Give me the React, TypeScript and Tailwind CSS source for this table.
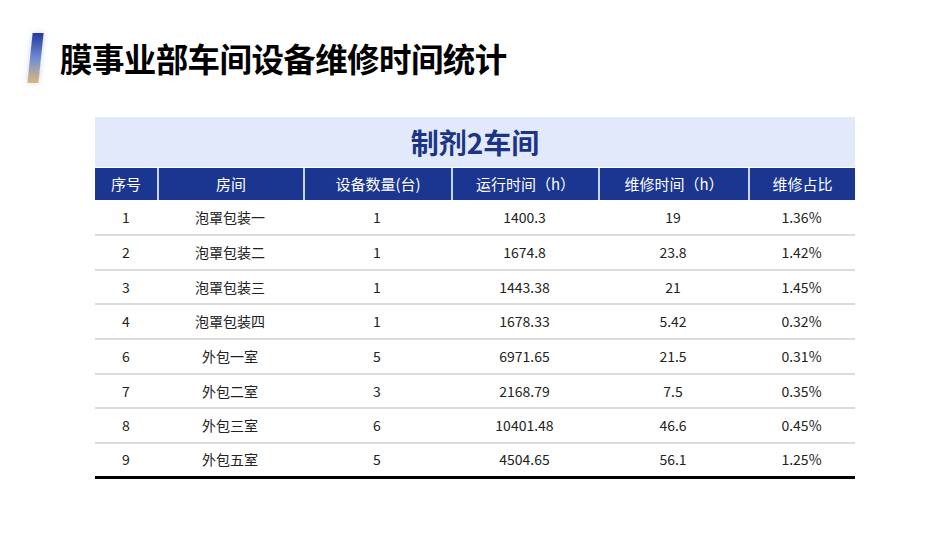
const rows = [
  ["1", "泡罩包装一", "1", "1400.3", "19", "1.36%"],
  ["2", "泡罩包装二", "1", "1674.8", "23.8", "1.42%"],
  ["3", "泡罩包装三", "1", "1443.38", "21", "1.45%"],
  ["4", "泡罩包装四", "1", "1678.33", "5.42", "0.32%"],
  ["6", "外包一室", "5", "6971.65", "21.5", "0.31%"],
  ["7", "外包二室", "3", "2168.79", "7.5", "0.35%"],
  ["8", "外包三室", "6", "10401.48", "46.6", "0.45%"],
  ["9", "外包五室", "5", "4504.65", "56.1", "1.25%"],
];

const headers = ["序号", "房间", "设备数量(台)", "运行时间（h）", "维修时间（h）", "维修占比"];
const cols = "grid grid-cols-[62px_146px_148px_147px_150px_107px]";

export default function App() {
  return (
    <div
      className="w-[950px] h-[534px] bg-white overflow-hidden"
      style={{ fontFamily: '"Microsoft YaHei", "Noto Sans CJK SC", "Noto Sans", sans-serif' }}
    >
      {/* title */}
      <div className="flex items-center pt-[33px] pl-[30px] h-[83px]">
        <div className="w-[11px] h-[50px] -skew-x-[6deg] bg-gradient-to-b from-[#26389c] via-[#6f8bd2] to-[#dcb776] shadow-[0_0_6px_rgba(120,140,200,0.35)]" />
        <h1 className="ml-[19px] text-[32.5px] font-bold text-black leading-none tracking-[-0.6px]">
          膜事业部车间设备维修时间统计
        </h1>
      </div>

      {/* table */}
      <div className="ml-[95px] mt-[34px] w-[760px]">
        <div className="h-[50px] bg-[#e1e9fa] flex items-center justify-center">
          <span className="text-[28px] font-bold text-[#1b3486] leading-none">制剂2车间</span>
        </div>
        <div className={`${cols} h-[33px] bg-[#1a3690] border-t border-white text-white text-[15px]`}>
          {headers.map((h, i) => (
            <div
              key={h}
              className={`flex items-center justify-center ${i > 0 ? "border-l-2 border-[#c9d4f0]" : ""}`}
            >
              {h}
            </div>
          ))}
        </div>
        {rows.map((r, ri) => (
          <div
            key={ri}
            className={`${cols} ${ri === 0 ? "h-[36px]" : "h-[34.7px]"} text-[14px] text-[#222] ${
              ri === rows.length - 1 ? "border-b-[3px] border-black" : "border-b-2 border-[#dcdcdc]"
            }`}
          >
            {r.map((c, ci) => (
              <div key={ci} className="flex items-center justify-center">
                {c}
              </div>
            ))}
          </div>
        ))}
      </div>
    </div>
  );
}
